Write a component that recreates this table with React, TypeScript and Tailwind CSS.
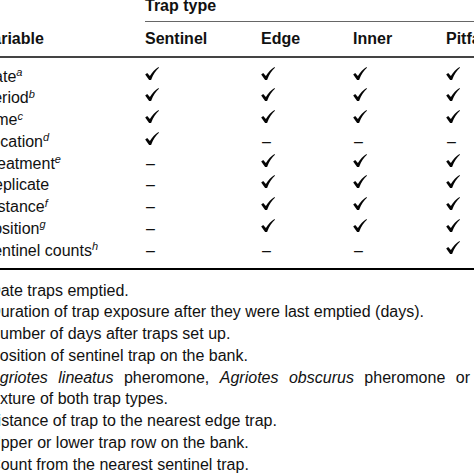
import React from 'react';

const cols = 'grid grid-cols-[162.5px_116px_92px_93px_1fr]';

const Check = () => (
  <svg viewBox="0 0 14 13" className="block w-[14px] h-[13px]" fill="#050505">
    <path d="M0.2 7.5 L2.2 5.9 L4.9 9.0 C7.3 5.3 10.2 2.1 13.5 0.1 L13.95 0.8 C10.9 3.7 8.2 7.4 6.1 12.9 L4.1 12.9 Z" />
  </svg>
);

const Cell = ({ on }: { on: boolean }) =>
  on ? (
    <div className="pt-[1px]">
      <Check />
    </div>
  ) : (
    <div className="pl-[1px]">–</div>
  );

const rows: { label: string; note?: string; marks: boolean[] }[] = [
  { label: 'Date', note: 'a', marks: [true, true, true, true] },
  { label: 'Period', note: 'b', marks: [true, true, true, true] },
  { label: 'Time', note: 'c', marks: [true, true, true, true] },
  { label: 'Location', note: 'd', marks: [true, false, false, false] },
  { label: 'Treatment', note: 'e', marks: [false, true, true, true] },
  { label: 'Replicate', marks: [false, true, true, true] },
  { label: 'Distance', note: 'f', marks: [false, true, true, true] },
  { label: 'Position', note: 'g', marks: [false, true, true, true] },
  { label: 'Sentinel counts', note: 'h', marks: [false, false, false, true] },
];

const notes: { key: string; text: React.ReactNode }[] = [
  { key: 'a', text: 'Date traps emptied.' },
  { key: 'b', text: 'Duration of trap exposure after they were last emptied (days).' },
  { key: 'c', text: 'Number of days after traps set up.' },
  { key: 'd', text: 'Position of sentinel trap on the bank.' },
  {
    key: 'e',
    text: (
      <>
        <i>Agriotes lineatus</i> pheromone, <i>Agriotes obscurus</i> pheromone or mixture of both trap types.
      </>
    ),
  },
  { key: 'f', text: 'Distance of trap to the nearest edge trap.' },
  { key: 'g', text: 'Upper or lower trap row on the bank.' },
  { key: 'h', text: 'Count from the nearest sentinel trap.' },
];

const App = () => {
  return (
    <div className="w-[474px] h-[474px] overflow-hidden bg-white text-[#111] text-[16px] font-['Liberation_Sans',Arial,sans-serif]">
      <div className="-ml-[17.5px] -mt-[4px]">
        <div className="grid grid-cols-[162.5px_1fr]">
          <div />
          <div className="border-b border-[#666] pb-[5px] leading-[20px] font-bold">Trap type</div>
        </div>
        <div className={cols + ' pt-[6.5px] pb-[7.5px] leading-[20px] font-bold'}>
          <div>Variable</div>
          <div>Sentinel</div>
          <div>Edge</div>
          <div>Inner</div>
          <div className="whitespace-nowrap">Pitfall</div>
        </div>
        <div className="h-[2px] bg-[#444]" />
        <div className="pt-[7.5px] pb-[6.75px]">
          {rows.map((r) => (
            <div key={r.label} className={cols + ' h-[21.75px] leading-[21.75px]'}>
              <div className="whitespace-nowrap">
                {r.label}
                {r.note && <sup className="text-[11px] italic">{r.note}</sup>}
              </div>
              {r.marks.map((m, i) => (
                <Cell key={i} on={m} />
              ))}
            </div>
          ))}
        </div>
        <div className="h-[2px] bg-black" />
      </div>
      <div className="-ml-[17px] w-[487px] mt-[9.6px] leading-[21.75px] text-justify">
        {notes.map((n) => (
          <p key={n.key}>
            <sup className="text-[11px] italic">{n.key}</sup>
            {n.text}
          </p>
        ))}
      </div>
    </div>
  );
};

export default App;
